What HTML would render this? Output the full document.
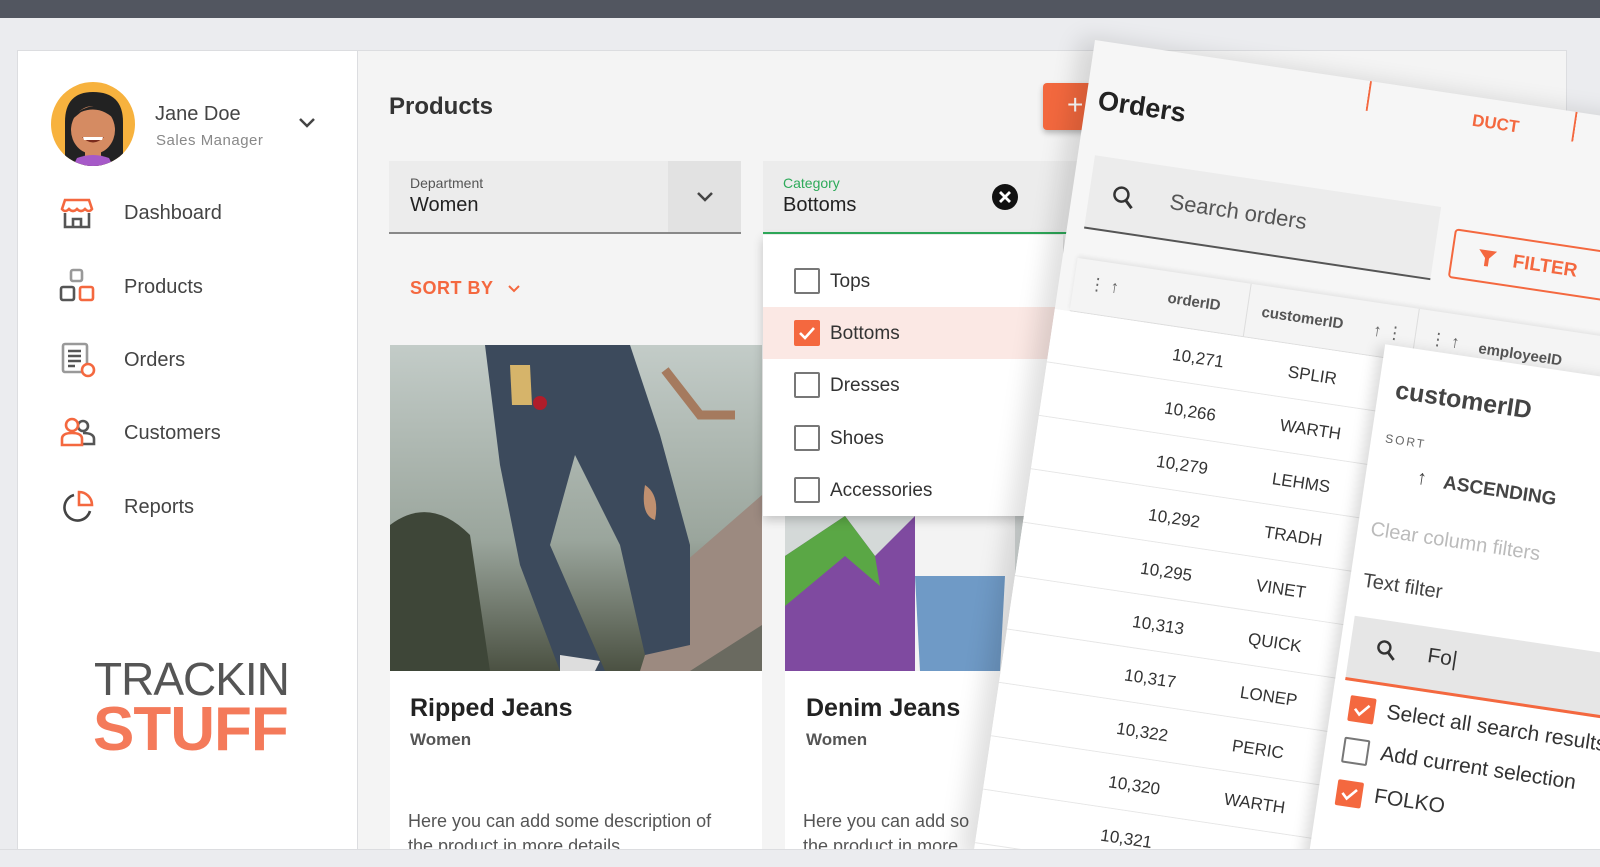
<!DOCTYPE html>
<html><head><meta charset="utf-8"><style>
*{box-sizing:border-box;margin:0;padding:0}
html,body{width:1600px;height:867px;overflow:hidden}
body{background:#ebecef;font-family:"Liberation Sans",sans-serif;color:#333}
#wrap{position:relative;width:1600px;height:867px;overflow:hidden;clip-path:inset(0 0 0 0)}
.abs{position:absolute}
.top{left:0;top:0;width:1600px;height:18px;background:#525660}
.main{left:17px;top:50px;width:1550px;height:817px;background:#f4f4f4;border:1px solid #dcdde0}
.side{left:17px;top:50px;width:341px;height:817px;background:#fff;border:1px solid #dcdde0}
.nav{left:124px;font-size:20px;color:#444}
.field{background:#ececec}
.cb{width:26px;height:26px;border:2px solid #777;border-radius:2px;background:#fff}
.cbon{background:#f4683f;border-color:#f4683f}
.item{left:830px;font-size:19px;color:#333}
.card{background:#fff}
.panel{left:1095px;top:40px;width:700px;height:830px;background:#f6f6f6;transform:rotate(8.5deg);transform-origin:0 0;box-shadow:-14px 0 24px rgba(0,0,0,.13);overflow:hidden}
.panel .a{position:absolute}
.row{left:0;width:340px;height:54px;border-bottom:1px solid #e6e6e6;background:#fff}
.num{width:175px;text-align:right;font-size:17px;color:#333}
.cid{left:240px;font-size:17px;color:#333}
</style></head><body><div id="wrap">
<div class="abs top"></div>
<div class="abs main"></div>
<div class="abs side"></div>

<svg class="abs" style="left:51px;top:82px" width="84" height="84" viewBox="0 0 84 84">
<defs><clipPath id="c"><circle cx="42" cy="42" r="42"/></clipPath></defs>
<circle cx="42" cy="42" r="42" fill="#f7b23e"/>
<g clip-path="url(#c)">
<path d="M14 84 L14 40 Q14 10 42 10 Q72 10 72 40 L72 84Z" fill="#222"/>
<rect x="34" y="60" width="16" height="20" fill="#d58b62"/>
<ellipse cx="42" cy="48" rx="22" ry="24" fill="#d58b62"/>
<path d="M18 40 Q30 20 60 24 Q66 30 66 40 Q50 22 30 30 Z" fill="#222"/>
<path d="M31 55 Q42 66 53 55 Z" fill="#7a2b1c"/><path d="M32 55 L52 55 L51 58 L33 58Z" fill="#fff"/>
<path d="M26 76 Q42 70 58 76 L62 84 L22 84Z" fill="#a659c8"/>
</g></svg>
<div class="abs" style="left:155px;top:103px;font-size:20px;color:#444">Jane Doe</div>
<div class="abs" style="left:156px;top:132px;font-size:15px;color:#888;letter-spacing:.5px">Sales Manager</div>
<svg class="abs" style="left:298px;top:117px" width="18" height="12"><path d="M2 2 L9 9 L16 2" stroke="#444" stroke-width="2.5" fill="none"/></svg>

<svg class="abs" style="left:60px;top:196px" width="34" height="34" viewBox="0 0 34 34" fill="none" stroke-width="2.6"><path d="M5 4 H29 L32 13 Q29 17 25 13 Q21 17 17 13 Q13 17 9 13 Q5 17 2 13Z" stroke="#f4683f"/><path d="M5 17 V31 H29 V17 M13 31 V23 H21 V31" stroke="#555"/></svg>
<div class="abs nav" style="top:202px">Dashboard</div>
<svg class="abs" style="left:59px;top:268px" width="36" height="36" viewBox="0 0 36 36" fill="none" stroke-width="2.6"><rect x="12" y="2" width="11" height="11" rx="2" stroke="#999"/><rect x="2" y="19" width="13" height="13" rx="2" stroke="#555"/><rect x="21" y="19" width="13" height="13" rx="2" stroke="#f4683f"/></svg>
<div class="abs nav" style="top:276px">Products</div>
<svg class="abs" style="left:61px;top:342px" width="36" height="36" viewBox="0 0 36 36" fill="none" stroke-width="2.6"><rect x="2" y="2" width="24" height="28" rx="2" stroke="#999"/><path d="M7 9H20M7 14H20M7 19H20M7 24H14" stroke="#555"/><circle cx="27" cy="28" r="6" stroke="#f4683f" fill="#fff"/></svg>
<div class="abs nav" style="top:349px">Orders</div>
<svg class="abs" style="left:60px;top:417px" width="36" height="30" viewBox="0 0 36 30" fill="none" stroke-width="2.6"><circle cx="23" cy="9" r="5" stroke="#555"/><path d="M20 27 H34 V22 Q34 16 23 16" stroke="#555"/><circle cx="12" cy="8" r="6" stroke="#f4683f" fill="#fff"/><path d="M2 28 V22 Q2 16 12 16 Q22 16 22 22 V28Z" stroke="#f4683f" fill="#fff"/></svg>
<div class="abs nav" style="top:422px">Customers</div>
<svg class="abs" style="left:61px;top:490px" width="34" height="34" viewBox="0 0 34 34" fill="none" stroke-width="2.6"><path d="M13 5 A13 13 0 1 0 29 21" stroke="#444"/><path d="M18 2 V15 H31 A13 13 0 0 0 18 2Z" stroke="#f4683f"/></svg>
<div class="abs nav" style="top:496px">Reports</div>

<div class="abs" style="left:94px;top:652px;font-size:46px;color:#555;letter-spacing:-1px">TRACKIN</div>
<div class="abs" style="left:93px;top:694px;font-size:62px;color:#f47a5a;font-weight:bold;letter-spacing:-1px">STUFF</div>

<div class="abs" style="left:389px;top:93px;font-size:24px;font-weight:bold;color:#333">Products</div>
<div class="abs" style="left:1043px;top:83px;width:70px;height:47px;background:#f2683e;border-radius:4px;box-shadow:0 3px 6px rgba(0,0,0,.25);color:#fff;font-size:28px;padding:6px 0 0 24px">+</div>

<div class="abs field" style="left:389px;top:161px;width:352px;height:73px;border-bottom:2px solid #888"></div>
<div class="abs" style="left:668px;top:161px;width:73px;height:71px;background:#e2e2e2"></div>
<svg class="abs" style="left:696px;top:191px" width="18" height="12"><path d="M2 2 L9 9 L16 2" stroke="#444" stroke-width="2.5" fill="none"/></svg>
<div class="abs" style="left:410px;top:175px;font-size:14px;color:#555">Department</div>
<div class="abs" style="left:410px;top:194px;font-size:20px;color:#222">Women</div>

<div class="abs field" style="left:763px;top:161px;width:320px;height:73px;border-bottom:2px solid #2eaa5a"></div>
<div class="abs" style="left:783px;top:175px;font-size:14px;color:#2eaa5a">Category</div>
<div class="abs" style="left:783px;top:194px;font-size:20px;color:#222">Bottoms</div>
<svg class="abs" style="left:991px;top:183px" width="28" height="28"><circle cx="14" cy="14" r="13" fill="#111"/><path d="M9 9L19 19M19 9L9 19" stroke="#fff" stroke-width="2.8"/></svg>

<div class="abs" style="left:410px;top:278px;font-size:18px;font-weight:bold;color:#f4683f;letter-spacing:.5px">SORT BY</div>
<svg class="abs" style="left:507px;top:284px" width="14" height="10"><path d="M2 2 L7 7 L12 2" stroke="#f4683f" stroke-width="2" fill="none"/></svg>

<div class="abs card" style="left:390px;top:345px;width:372px;height:522px"></div>
<svg class="abs" style="left:390px;top:345px" width="372" height="326" viewBox="0 0 372 326">
<defs><linearGradient id="s1" x1="0" y1="0" x2="0" y2="1"><stop offset="0" stop-color="#c3ccc8"/><stop offset=".6" stop-color="#9aa59c"/><stop offset="1" stop-color="#4b5142"/></linearGradient></defs>
<rect width="372" height="326" fill="url(#s1)"/>
<path d="M0 180 Q40 150 80 190 L100 326 L0 326Z" fill="#3e4638"/>
<path d="M280 230 L372 150 L372 326 L250 326Z" fill="#9c8a80"/>
<path d="M300 326 L372 280 L372 326Z" fill="#6a6a60"/>
<path d="M95 0 L240 0 L270 90 L300 200 L300 300 L255 310 L230 200 L185 110 L160 200 L215 326 L170 326 L130 220 L110 120Z" fill="#3c4a5c"/>
<path d="M120 20 L140 20 L142 60 L122 60Z" fill="#d6b46a"/>
<circle cx="150" cy="58" r="7" fill="#b01d2a"/>
<path d="M255 140 Q270 150 265 175 Q250 170 255 140Z" fill="#c09070"/>
<path d="M275 25 L310 70 L345 70" stroke="#a57a5e" stroke-width="9" fill="none"/>
<path d="M170 310 L210 316 L205 326 L170 326Z" fill="#ddd"/>
</svg>
<div class="abs" style="left:410px;top:694px;font-size:25px;font-weight:bold;color:#222">Ripped Jeans</div>
<div class="abs" style="left:410px;top:730px;font-size:17px;font-weight:bold;color:#555">Women</div>
<div class="abs" style="left:408px;top:811px;font-size:18px;color:#555">Here you can add some description of</div>
<div class="abs" style="left:408px;top:836px;font-size:18px;color:#555">the product in more details</div>

<div class="abs card" style="left:785px;top:345px;width:300px;height:522px"></div>
<svg class="abs" style="left:785px;top:516px" width="300" height="155">
<rect width="300" height="155" fill="#d4d9d8"/>
<path d="M0 40 L60 0 L90 40 L130 0 L130 155 L0 155Z" fill="#7f4aa0"/>
<path d="M0 40 L60 0 L90 40 L95 70 L60 40 L0 90Z" fill="#5aa745"/>
<path d="M130 0 L230 0 L230 155 L130 155Z" fill="#f3f3f3"/>
<path d="M130 60 L220 60 L215 155 L135 155Z" fill="#6f9ac6"/>
</svg>
<div class="abs" style="left:806px;top:694px;font-size:25px;font-weight:bold;color:#222">Denim Jeans</div>
<div class="abs" style="left:806px;top:730px;font-size:17px;font-weight:bold;color:#555">Women</div>
<div class="abs" style="left:803px;top:811px;font-size:18px;color:#555">Here you can add so</div>
<div class="abs" style="left:803px;top:836px;font-size:18px;color:#555">the product in more</div>

<div class="abs" style="left:763px;top:235px;width:300px;height:281px;background:#fff;box-shadow:0 4px 10px rgba(0,0,0,.2)"></div>
<div class="abs" style="left:763px;top:307px;width:300px;height:52px;background:#fbe8e4"></div>
<div class="abs cb" style="left:794px;top:268px"></div><div class="abs item" style="top:271px">Tops</div>
<div class="abs cb cbon" style="left:794px;top:320px"></div>
<svg class="abs" style="left:794px;top:320px" width="26" height="26"><path d="M6 13 L11 18 L20 8" stroke="#fff" stroke-width="2.6" fill="none"/></svg>
<div class="abs item" style="top:323px">Bottoms</div>
<div class="abs cb" style="left:794px;top:372px"></div><div class="abs item" style="top:375px">Dresses</div>
<div class="abs cb" style="left:794px;top:425px"></div><div class="abs item" style="top:428px">Shoes</div>
<div class="abs cb" style="left:794px;top:477px"></div><div class="abs item" style="top:480px">Accessories</div>

<div class="abs panel">
 <div class="a" style="left:278px;top:-4px;width:210px;height:34px;border:2px solid #f4683f;border-bottom:none;border-radius:4px 4px 0 0;overflow:hidden;color:#f4683f;font-weight:bold;font-size:17px;padding:16px 0 0 105px">DUCT</div>
 <div class="a" style="left:12px;top:44px;font-size:27px;font-weight:bold;color:#222">Orders</div>
 <div class="a" style="left:17px;top:114px;width:350px;height:74px;background:#ececec;border-bottom:2px solid #555"></div>
 <svg class="a" style="left:40px;top:140px" width="24" height="24"><circle cx="9" cy="9" r="7" stroke="#333" stroke-width="2.5" fill="none"/><path d="M14 14 L21 21" stroke="#333" stroke-width="3"/></svg>
 <div class="a" style="left:98px;top:136px;font-size:22px;color:#555">Search orders</div>
 <div class="a" style="left:384px;top:133px;width:200px;height:50px;border:2px solid #f4683f;border-radius:4px;color:#f4683f;font-weight:bold;font-size:19px;padding:12px 0 0 60px">FILTER</div>
 <svg class="a" style="left:410px;top:148px" width="20" height="20"><path d="M1 2 H19 L12 10 V18 L8 18 V10Z" fill="#f4683f"/></svg>
 <div class="a" style="left:15px;top:218px;width:700px;height:54px;background:#f4f4f4;border-bottom:1px solid #ddd;box-shadow:0 -2px 5px rgba(0,0,0,.08)"></div>
 <div class="a" style="left:190px;top:218px;width:1px;height:54px;background:#ddd"></div>
 <div class="a" style="left:360px;top:218px;width:1px;height:54px;background:#ddd"></div>
 <div class="a" style="left:30px;top:232px;font-size:17px;color:#666">&#8942; &#8593;</div>
 <div class="a" style="left:110px;top:236px;font-size:15px;font-weight:bold;color:#555">orderID</div>
 <div class="a" style="left:205px;top:236px;font-size:15px;font-weight:bold;color:#555">customerID</div>
 <div class="a" style="left:318px;top:236px;font-size:17px;color:#666">&#8593; &#8942;</div>
 <div class="a" style="left:375px;top:236px;font-size:17px;color:#666">&#8942; &#8593;</div>
 <div class="a" style="left:425px;top:240px;font-size:15px;font-weight:bold;color:#555">employeeID</div>
 <div class="a" style="left:0;top:272px;width:360px;height:560px;background:#fff"></div>
 <div class="a row" style="top:272px"></div><div class="a num" style="top:290px">10,271</div><div class="a cid" style="top:290px">SPLIR</div>
 <div class="a row" style="top:326px"></div><div class="a num" style="top:344px">10,266</div><div class="a cid" style="top:344px">WARTH</div>
 <div class="a row" style="top:380px"></div><div class="a num" style="top:398px">10,279</div><div class="a cid" style="top:398px">LEHMS</div>
 <div class="a row" style="top:434px"></div><div class="a num" style="top:452px">10,292</div><div class="a cid" style="top:452px">TRADH</div>
 <div class="a row" style="top:488px"></div><div class="a num" style="top:506px">10,295</div><div class="a cid" style="top:506px">VINET</div>
 <div class="a row" style="top:542px"></div><div class="a num" style="top:560px">10,313</div><div class="a cid" style="top:560px">QUICK</div>
 <div class="a row" style="top:596px"></div><div class="a num" style="top:614px">10,317</div><div class="a cid" style="top:614px">LONEP</div>
 <div class="a row" style="top:650px"></div><div class="a num" style="top:668px">10,322</div><div class="a cid" style="top:668px">PERIC</div>
 <div class="a row" style="top:704px"></div><div class="a num" style="top:722px">10,320</div><div class="a cid" style="top:722px">WARTH</div>
 <div class="a row" style="top:758px"></div><div class="a num" style="top:776px">10,321</div>
 <div class="a" style="left:332px;top:258px;width:380px;height:580px;background:#fff;box-shadow:-6px 2px 14px rgba(0,0,0,.15)"></div>
 <div class="a" style="left:349px;top:288px;font-size:25px;font-weight:bold;color:#444">customerID</div>
 <div class="a" style="left:346px;top:344px;font-size:12px;color:#666;letter-spacing:2px">SORT</div>
 <div class="a" style="left:383px;top:374px;font-size:20px;color:#444">&#8593;</div>
 <div class="a" style="left:410px;top:376px;font-size:19px;font-weight:bold;color:#444">ASCENDING</div>
 <div class="a" style="left:345px;top:432px;font-size:20px;color:#bbb">Clear column filters</div>
 <div class="a" style="left:345px;top:484px;font-size:20px;color:#444">Text filter</div>
 <div class="a" style="left:342px;top:531px;width:380px;height:65px;background:#e6e6e6;border-bottom:3px solid #f4683f"></div>
 <svg class="a" style="left:368px;top:550px" width="22" height="22"><circle cx="8" cy="8" r="6" stroke="#333" stroke-width="2.4" fill="none"/><path d="M12 12 L19 19" stroke="#333" stroke-width="2.8"/></svg>
 <div class="a" style="left:420px;top:548px;font-size:21px;color:#333">Fo|</div>
 <div class="a cb cbon" style="left:350px;top:610px"></div>
 <svg class="a" style="left:350px;top:610px" width="26" height="26"><path d="M6 13 L11 18 L20 8" stroke="#fff" stroke-width="2.6" fill="none"/></svg>
 <div class="a" style="left:388px;top:610px;font-size:21px;color:#333;white-space:nowrap">Select all search results</div>
 <div class="a cb" style="left:350px;top:652px"></div>
 <div class="a" style="left:388px;top:652px;font-size:21px;color:#333;white-space:nowrap">Add current selection</div>
 <div class="a cb cbon" style="left:350px;top:695px"></div>
 <svg class="a" style="left:350px;top:695px" width="26" height="26"><path d="M6 13 L11 18 L20 8" stroke="#fff" stroke-width="2.6" fill="none"/></svg>
 <div class="a" style="left:388px;top:695px;font-size:21px;color:#333">FOLKO</div>
</div>
<div class="abs" style="left:0;top:849px;width:1600px;height:18px;background:#ebecef;border-top:1px solid #dcdde0"></div>
</div></body></html>
